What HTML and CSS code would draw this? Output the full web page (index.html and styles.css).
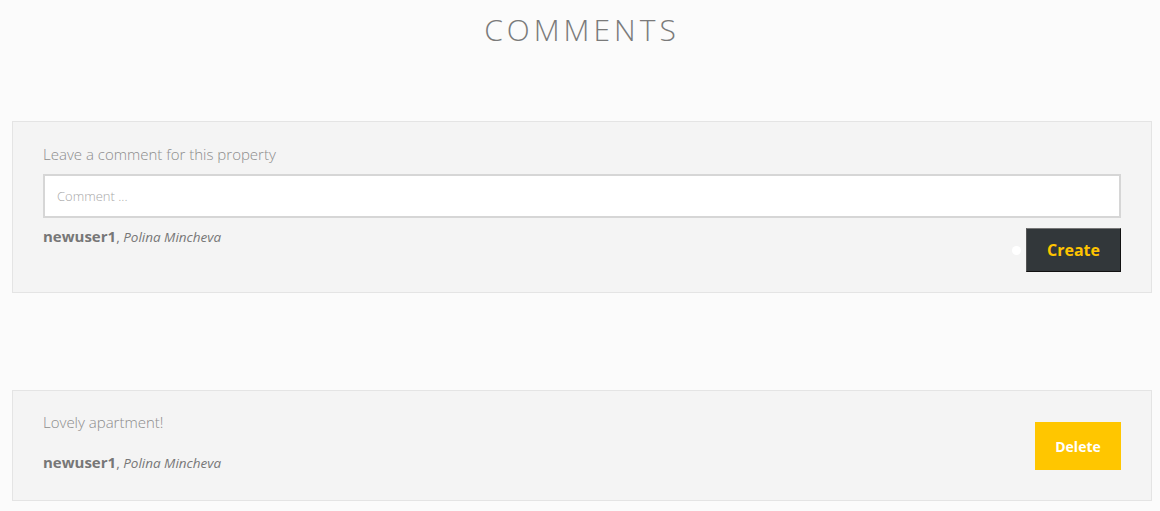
FILE: index.html
```html
<!DOCTYPE html>
<html lang="en">
<head>
    <meta charset="UTF-8">
    <meta name="viewport" content="width=device-width, initial-scale=1.0">
    <title>Comments</title>
    <link rel="stylesheet" href="styles.css">
</head>
<body>
    <div class="container">
        <h1>Comments</h1>

        <!-- New comment -->
        <form class="card new-comment">
            <label for="comment">Leave a comment for this property</label>
            <input type="text" id="comment" placeholder="Comment ...">
            <div class="row">
                <p class="author"><b>newuser1</b>, <i>Polina Mincheva</i></p>
                <div class="actions">
                    <span class="dot"></span>
                    <button type="button" class="btn-create">Create</button>
                </div>
            </div>
        </form>

        <!-- Existing comments -->
        <div class="card comment">
            <div class="comment-body">
                <p class="comment-text">Lovely apartment!</p>
                <p class="author"><b>newuser1</b>, <i>Polina Mincheva</i></p>
            </div>
            <button type="button" class="btn-delete">Delete</button>
        </div>
    </div>
</body>
</html>
```

FILE: styles.css
```css
*{
    box-sizing: border-box;
    margin: 0;
    padding: 0;
}

body {
    font-family: "Open Sans", Arial, sans-serif;
    background: #fbfbfb;
    color: #777;
}
.container {
    width: 1140px;
    margin-left: 12px;
}
h1 {
    text-align: center;
    font-weight: 300;
    font-size: 30px;
    line-height: 40px;
    letter-spacing: 4px;
    text-transform: uppercase;
    color: #7a7a7a;
    margin-top: 10px;
    margin-bottom: 71px;
}
.card {
    background: #f4f4f4;
    border: 1px solid #e4e4e4;
}
.new-comment {
    padding: 22px 30px 20px;
}
label {
    display: block;
    font-size: 15px;
    font-weight: 300;
    line-height: 20px;
    color: #8c8c8c;
    margin-bottom: 10px;
}
input {
    display: block;
    width: 100%;
    height: 44px;
    border: 2px solid #d6d6d6;
    background: #fff;
    padding: 0 12px;
    font-family: inherit;
    font-size: 13px;
    font-weight: 300;
    color: #777;
    outline: none;
}
input::placeholder {
    color: #a8a8a8;
}
.row {
    display: flex;
    justify-content: space-between;
    align-items: flex-start;
    margin-top: 10px;
}
.row .author {
    line-height: 17px;
}
.author {
    font-size: 13.5px;
    line-height: 20px;
    color: #777;
}
.author b {
    font-size: 15px;
    font-weight: 700;
}
.actions {
    display: flex;
    align-items: center;
}
.dot {
    width: 9px;
    height: 9px;
    border-radius: 50%;
    background: #fff;
    margin-right: 5px;
}
.btn-create {
    width: 95px;
    height: 44px;
    background: #32373a;
    color: #ffc400;
    font-family: inherit;
    font-size: 16px;
    font-weight: 700;
    border: 1px solid #111;
    border-top-color: #777;
    border-left-color: #555;
    cursor: pointer;
}
.comment {
    margin-top: 97px;
    padding: 21px 30px 27px;
    display: flex;
    justify-content: space-between;
    align-items: flex-start;
}
.comment-text {
    font-size: 15px;
    font-weight: 300;
    line-height: 20px;
    color: #8c8c8c;
    margin-bottom: 20px;
}
.btn-delete {
    width: 86px;
    height: 48px;
    background: #ffc600;
    color: #fff;
    font-family: inherit;
    font-size: 14px;
    font-weight: 700;
    border: none;
    cursor: pointer;
    margin-top: 10px;
}
```
